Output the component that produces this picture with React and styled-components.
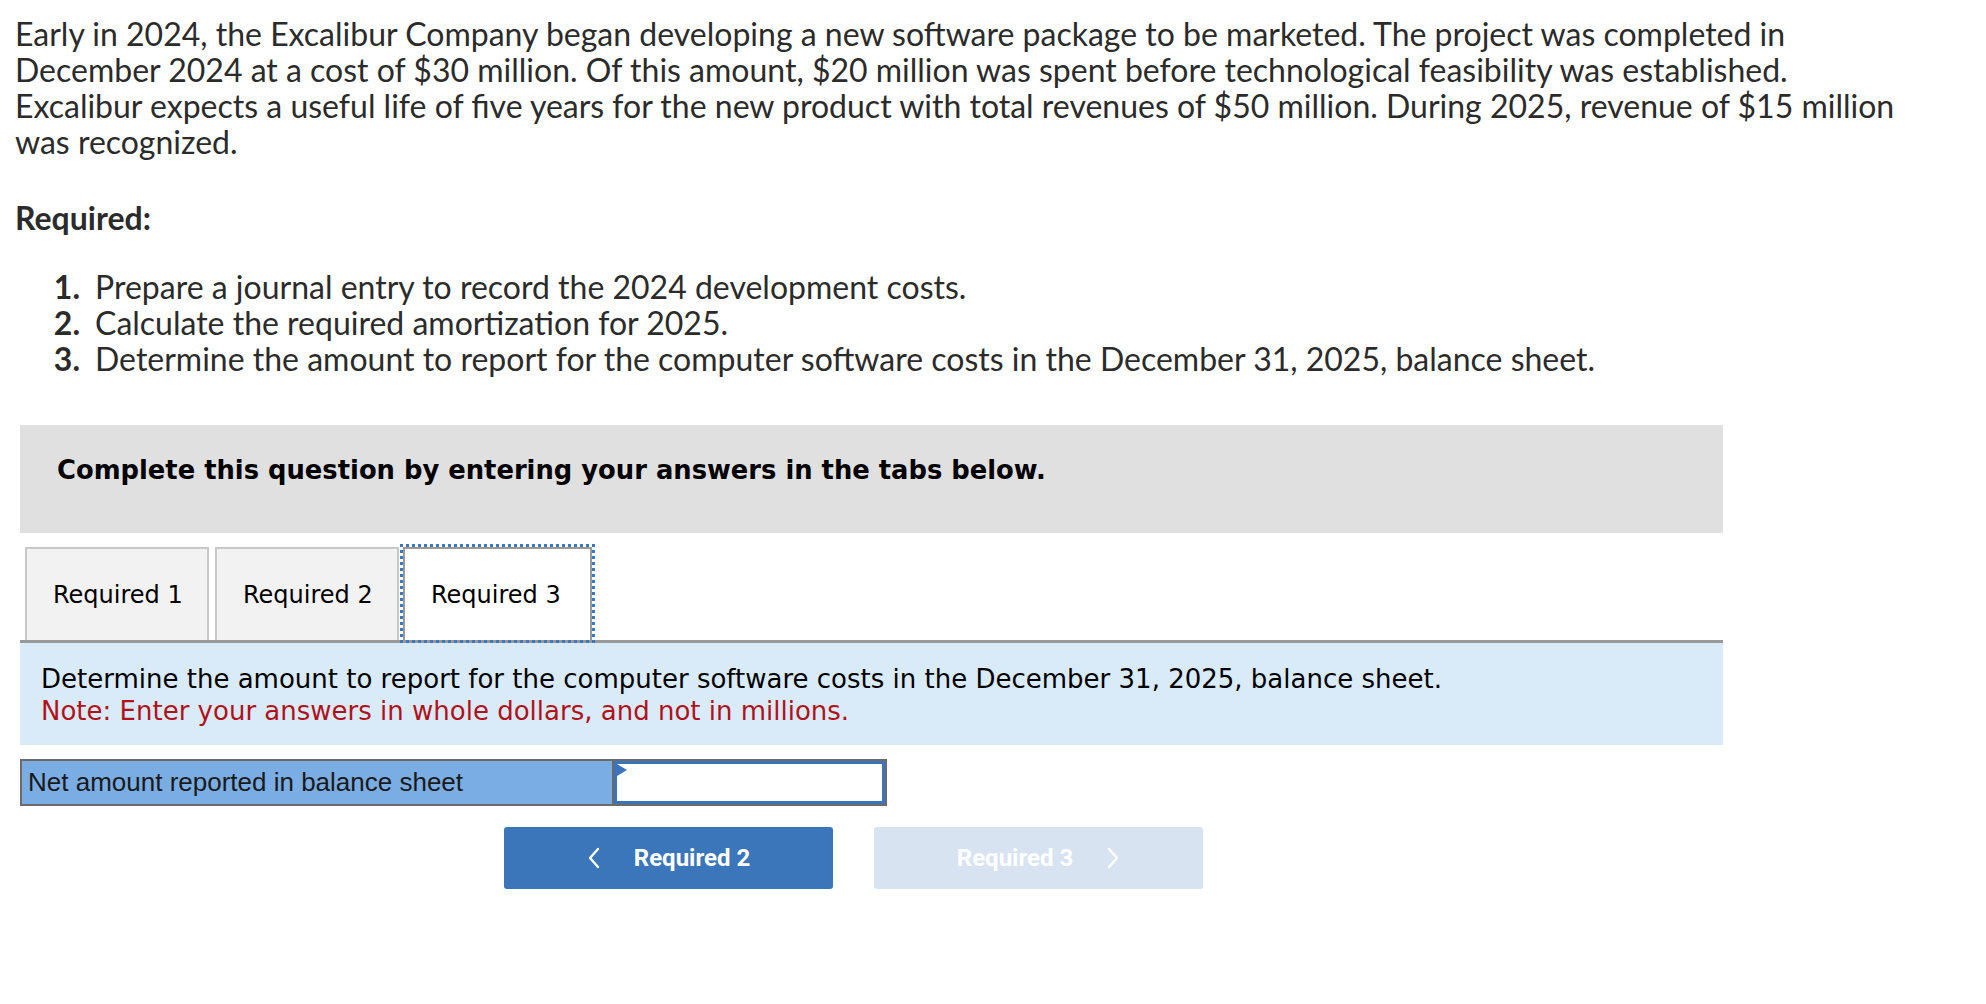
import React from "react";
import styled, { createGlobalStyle } from "styled-components";

const GlobalStyle = createGlobalStyle`
  html, body {
    margin: 0;
    padding: 0;
    background: #fff;
  }
  body {
    font-family: "Lato", "Liberation Sans", sans-serif;
    color: #2b2b2b;
  }
`;

const Page = styled.div`
  padding: 16px 0 40px 15px;
  width: 1708px;
`;

const Intro = styled.p`
  margin: 0;
  font-size: 32px;
  line-height: 36px;
  white-space: nowrap;
`;

const Heading = styled.h3`
  margin: 40px 0 0;
  font-size: 32px;
  line-height: 36px;
  font-weight: 700;
`;

const Steps = styled.ol`
  list-style: none;
  margin: 33px 0 0;
  padding: 0;
`;

const Step = styled.li`
  display: grid;
  grid-template-columns: 65px 1fr;
  column-gap: 15px;
  font-size: 32px;
  line-height: 36px;
`;

const StepNum = styled.span`
  text-align: right;
  font-weight: 700;
`;

const Banner = styled.div`
  margin: 48px 0 0 5px;
  height: 108px;
  box-sizing: border-box;
  background: #e0e0e0;
  padding: 30px 0 0 37px;
  font-family: "DejaVu Sans", Verdana, sans-serif;
  font-weight: 700;
  font-size: 25.8px;
  line-height: 30px;
  color: #000;
`;

const TabBar = styled.div`
  margin: 14px 0 0 5px;
  display: flex;
  align-items: flex-end;
  gap: 6px;
  padding-left: 5px;
  border-bottom: 3px solid #999;
`;

const Tab = styled.button`
  width: ${(p) => (p.$active ? "189px" : "184px")};
  height: 93px;
  margin: 0;
  margin-left: ${(p) => (p.$active ? "-2px" : "0")};
  padding: 0 0 0 ${(p) => (p.$active ? "26px" : "26px")};
  text-align: left;
  font-family: "DejaVu Sans", Verdana, sans-serif;
  font-size: 24px;
  color: #000;
  cursor: pointer;
  background: ${(p) => (p.$active ? "#fff" : "#f2f2f2")};
  border: 2px solid ${(p) => (p.$active ? "#999" : "#c8c8c8")};
  border-bottom: none;
  outline: ${(p) => (p.$active ? "3px dotted #3b78c3" : "none")};
  outline-offset: 0;
`;

const Prompt = styled.div`
  margin-left: 5px;
  background: #d9ebf9;
  padding: 20px 0 18px 21px;
  font-family: "DejaVu Sans", Verdana, sans-serif;
  font-size: 26px;
  line-height: 32px;
  color: #000;
`;

const Note = styled.div`
  color: #b0121b;
`;

const AnswerRow = styled.div`
  margin: 14px 0 0 5px;
  display: flex;
  width: 867px;
  height: 47px;
  border: 2px solid #6b6b6b;
  box-sizing: border-box;
`;

const Label = styled.div`
  flex: none;
  width: 592px;
  background: #7aade3;
  border-right: 2px solid #6b6b6b;
  display: flex;
  align-items: center;
  padding-left: 6px;
  font-family: "Liberation Sans", Arial, sans-serif;
  font-size: 26px;
  color: #1a1a1a;
  box-sizing: border-box;
`;

const InputWrap = styled.div`
  position: relative;
  flex: 1;
  min-width: 0;
  display: flex;
`;

const AmountInput = styled.input`
  flex: 1;
  width: 100%;
  min-width: 0;
  margin: 0;
  border: 3px solid #3b74bb;
  background: #fff;
  font-family: "Liberation Sans", Arial, sans-serif;
  font-size: 24px;
  text-align: right;
  outline: none;
  box-sizing: border-box;
`;

const Flag = styled.span`
  position: absolute;
  left: 3px;
  top: 3px;
  width: 0;
  height: 0;
  border-top: 6px solid transparent;
  border-bottom: 6px solid transparent;
  border-left: 10px solid #3b74bb;
`;

const NavRow = styled.div`
  margin: 21px 0 0 489px;
  display: flex;
  gap: 41px;
`;

const NavButton = styled.button`
  width: 329px;
  height: 62px;
  border: none;
  border-radius: 3px;
  background: ${(p) => (p.disabled ? "#d7e3f1" : "#3b76bb")};
  color: #fff;
  font-family: "Roboto", "Liberation Sans", sans-serif;
  font-weight: 700;
  font-size: 24px;
  display: flex;
  align-items: center;
  justify-content: center;
  gap: 33px;
  cursor: ${(p) => (p.disabled ? "default" : "pointer")};
  padding: 0;
  svg {
    flex: none;
  }
`;

const Chevron = ({ dir }) => (
  <svg width="14" height="24" viewBox="0 0 14 24" fill="none">
    <path
      d={dir === "left" ? "M11 3 L3 12 L11 21" : "M3 3 L11 12 L3 21"}
      stroke="#fff"
      strokeWidth="2.4"
      strokeLinecap="round"
      strokeLinejoin="round"
    />
  </svg>
);

const steps = [
  "Prepare a journal entry to record the 2024 development costs.",
  "Calculate the required amortization for 2025.",
  "Determine the amount to report for the computer software costs in the December 31, 2025, balance sheet.",
];

export default function App() {
  return (
    <Page>
      <GlobalStyle />
      <Intro>
        Early in 2024, the Excalibur Company began developing a new software package to be marketed. The project was completed in
        <br />
        December 2024 at a cost of $30 million. Of this amount, $20 million was spent before technological feasibility was established.
        <br />
        Excalibur expects a useful life of five years for the new product with total revenues of $50 million. During 2025, revenue of $15 million
        <br />
        was recognized.
      </Intro>
      <Heading>Required:</Heading>
      <Steps>
        {steps.map((s, i) => (
          <Step key={i}>
            <StepNum>{i + 1}.</StepNum>
            <span>{s}</span>
          </Step>
        ))}
      </Steps>
      <Banner>Complete this question by entering your answers in the tabs below.</Banner>
      <TabBar>
        <Tab>Required 1</Tab>
        <Tab>Required 2</Tab>
        <Tab $active>Required 3</Tab>
      </TabBar>
      <Prompt>
        Determine the amount to report for the computer software costs in the December 31, 2025, balance sheet.
        <Note>Note: Enter your answers in whole dollars, and not in millions.</Note>
      </Prompt>
      <AnswerRow>
        <Label>Net amount reported in balance sheet</Label>
        <InputWrap>
          <AmountInput type="text" aria-label="Net amount reported in balance sheet" />
          <Flag />
        </InputWrap>
      </AnswerRow>
      <NavRow>
        <NavButton>
          <Chevron dir="left" />
          <span>Required 2</span>
        </NavButton>
        <NavButton disabled>
          <span>Required 3</span>
          <Chevron dir="right" />
        </NavButton>
      </NavRow>
    </Page>
  );
}
